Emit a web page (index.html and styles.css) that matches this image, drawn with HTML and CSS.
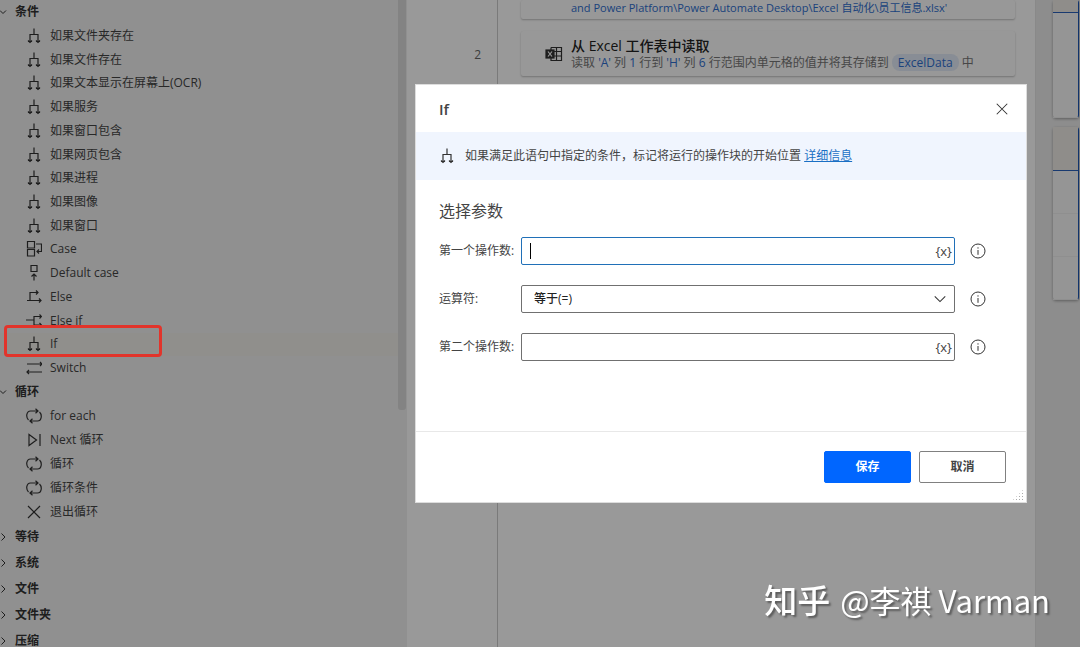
FILE: index.html
```html
<!DOCTYPE html>
<html lang="zh-CN">
<head>
    <meta charset="utf-8">
    <title>If</title>
    <link rel="stylesheet" href="styles.css">
</head>
<body>
    <svg class="sprite" aria-hidden="true">
        <symbol id="i-if" viewBox="0 0 16 16"><path d="M8 .5V6.500M4 14.500V6.500H12V14.500M2 12.500L4 14.500L6 12.500M10 12.500L12 14.500L14 12.500M2 13.500H6M10 13.500H14"/></symbol>
        <symbol id="i-case" viewBox="0 0 16 16"><path d="M1.500 .5H8.500V7H1.500ZM1.500 8.500H8.500V15H1.500ZM10 3H15.500V10.500H11M13 8.500L11 10.500L13 12.500"/></symbol>
        <symbol id="i-default" viewBox="0 0 16 16"><path d="M5 .5H11V6.500H5ZM8 15.500V9M5.500 11.500L8 9L10.500 11.500"/></symbol>
        <symbol id="i-else" viewBox="0 0 16 16"><path d="M1 11.500H15M13 9.500L15 11.500L13 13.500M4 11.500V3.500H12M10 1.500L12 3.500L10 5.500"/></symbol>
        <symbol id="i-elseif" viewBox="0 0 16 16"><path d="M0 7H8M15.500 3.500H8V12H15.500M13.500 1.500L15.500 3.500L13.500 5.500M13.500 10L15.500 12L13.500 14"/></symbol>
        <symbol id="i-switch" viewBox="0 0 16 16"><path d="M1 4H16M14 2L16 4L14 6M16 12H1M3 10L1 12L3 14"/></symbol>
        <symbol id="i-loop" viewBox="0 0 16 16"><path d="M2.500 12C-.5 9 .5 3 4.500 3H11.500M9.500 .8L12 3L9.500 5.200M13.500 4C16.500 7 15.500 13 11.500 13H4.500M6.500 10.800L4 13L6.500 15.200"/></symbol>
        <symbol id="i-next" viewBox="0 0 16 16"><path d="M3 2.500V13.500L10.500 8ZM14 2V14"/></symbol>
        <symbol id="i-x" viewBox="0 0 16 16"><path d="M2 2L14 14M14 2L2 14"/></symbol>
        <symbol id="i-down" viewBox="0 0 16 16"><path d="M2 5L8 11L14 5"/></symbol>
        <symbol id="i-right" viewBox="0 0 16 16"><path d="M5 1L12 8L5 15"/></symbol>
        <symbol id="i-info" viewBox="0 0 16 16"><circle cx="8" cy="8" r="7"/><path d="M8 7V11.800M8 4.300V5.600"/></symbol>
    </svg>

    <div class="app">
        <aside class="sidebar">
            <nav class="tree">
                <h2 class="group"><svg><use href="#i-down"/></svg>条件</h2>
                <ul class="actions conditions">
                    <li><svg><use href="#i-if"/></svg>如果文件夹存在</li>
                    <li><svg><use href="#i-if"/></svg>如果文件存在</li>
                    <li><svg><use href="#i-if"/></svg>如果文本显示在屏幕上(OCR)</li>
                    <li><svg><use href="#i-if"/></svg>如果服务</li>
                    <li><svg><use href="#i-if"/></svg>如果窗口包含</li>
                    <li><svg><use href="#i-if"/></svg>如果网页包含</li>
                    <li><svg><use href="#i-if"/></svg>如果进程</li>
                    <li><svg><use href="#i-if"/></svg>如果图像</li>
                    <li><svg><use href="#i-if"/></svg>如果窗口</li>
                    <li><svg><use href="#i-case"/></svg>Case</li>
                    <li><svg><use href="#i-default"/></svg>Default case</li>
                    <li><svg><use href="#i-else"/></svg>Else</li>
                    <li><svg><use href="#i-elseif"/></svg>Else if</li>
                    <li class="selected"><svg><use href="#i-if"/></svg>If<span class="marker"></span></li>
                    <li><svg><use href="#i-switch"/></svg>Switch</li>
                </ul>
                <h2 class="group"><svg><use href="#i-down"/></svg>循环</h2>
                <ul class="actions loops">
                    <li><svg><use href="#i-loop"/></svg>for each</li>
                    <li><svg><use href="#i-next"/></svg>Next 循环</li>
                    <li><svg><use href="#i-loop"/></svg>循环</li>
                    <li><svg><use href="#i-loop"/></svg>循环条件</li>
                    <li><svg><use href="#i-x"/></svg>退出循环</li>
                </ul>
                <div class="closed-groups">
                    <h2 class="group"><svg><use href="#i-right"/></svg>等待</h2>
                    <h2 class="group"><svg><use href="#i-right"/></svg>系统</h2>
                    <h2 class="group"><svg><use href="#i-right"/></svg>文件</h2>
                    <h2 class="group"><svg><use href="#i-right"/></svg>文件夹</h2>
                    <h2 class="group"><svg><use href="#i-right"/></svg>压缩</h2>
                </div>
            </nav>
            <div class="scroll-thumb"></div>
        </aside>

        <main class="flow">
            <div class="step first">
                <div class="line-no"></div>
                <div class="card">
                    <p class="value">and Power Platform\Power Automate Desktop\Excel 自动化\员工信息.xlsx'</p>
                </div>
            </div>
            <div class="step">
                <div class="line-no">2</div>
                <div class="card">
                    <svg class="excel" viewBox="0 0 18 16"><path d="M6 1.500H16.500V14.500H6V1.500M6 5.500H16.500M6 10H16.500M11.500 1.500V14.500"/><rect x="1" y="4" width="8" height="8"/><path class="excel-x" d="M3 5.500L7 10.500M7 5.500L3 10.500"/></svg>
                    <div>
                        <h3>从 Excel 工作表中读取</h3>
                        <p>读取 <b>'A'</b> 列 <b>1</b> 行到 <b>'H'</b> 列 <b>6</b> 行范围内单元格的值并将其存储到 <span class="variable">ExcelData</span> 中</p>
                    </div>
                </div>
            </div>
            <div class="step rest">
                <div class="line-no"></div>
            </div>
        </main>

        <aside class="variables">
            <section class="var-card top">
                <div class="var-head"></div>
                <div class="var-row"></div>
            </section>
            <section class="var-card">
                <div class="var-head"></div>
                <div class="var-row"></div>
                <div class="var-row"></div>
                <div class="var-row"></div>
            </section>
        </aside>
    </div>

    <div class="overlay"></div>

    <form class="dialog" role="dialog" aria-labelledby="dialogTitle" onsubmit="return false">
        <header class="dialog-head">
            <h1 id="dialogTitle">If</h1>
            <button type="button" class="close" aria-label="关闭"><svg><use href="#i-x"/></svg></button>
        </header>
        <div class="summary">
            <svg><use href="#i-if"/></svg>
            <p>如果满足此语句中指定的条件，标记将运行的操作块的开始位置 <a href="#">详细信息</a></p>
        </div>
        <div class="params">
            <h2>选择参数</h2>
            <div class="row">
                <label for="first">第一个操作数:</label>
                <div class="field active">
                    <input type="text" id="first">
                    <span class="caret"></span>
                    <button type="button">{x}</button>
                </div>
                <svg class="info"><use href="#i-info"/></svg>
            </div>
            <div class="row">
                <label for="operator">运算符:</label>
                <div class="field">
                    <select id="operator"><option>等于(=)</option></select>
                    <svg class="arrow"><use href="#i-down"/></svg>
                </div>
                <svg class="info"><use href="#i-info"/></svg>
            </div>
            <div class="row">
                <label for="second">第二个操作数:</label>
                <div class="field">
                    <input type="text" id="second">
                    <button type="button">{x}</button>
                </div>
                <svg class="info"><use href="#i-info"/></svg>
            </div>
        </div>
        <footer class="dialog-foot">
            <button type="submit" class="save">保存</button>
            <button type="button" class="cancel">取消</button>
        </footer>
        <span class="grip"></span>
    </form>

    <div class="watermark"><b>知乎</b><span>@李祺 Varman</span></div>
</body>
</html>
```
FILE: styles.css
```css
* {
    box-sizing: border-box;
}
body {
    margin: 0;
    font-family: "Open Sans", "Noto Sans CJK SC", sans-serif;
    font-size: 12px;
    line-height: 16px;
    color: #444;
    overflow: hidden;
}
h1, h2, h3, p, ul {
    margin: 0;
    padding: 0;
}
button, input, select {
    font: inherit;
    color: inherit;
}
svg {
    width: 16px;
    height: 16px;
    flex: none;
    fill: none;
    stroke: #333;
    stroke-width: 1.2;
}
.sprite {
    position: absolute;
    width: 0;
    height: 0;
}
.app {
    display: flex;
    height: 100vh;
    background-color: #fff;
}

/* action tree */
.sidebar {
    display: flex;
    width: 407px;
    flex: none;
    padding-right: 1px;
    background-color: #f0f0f0;
}
.tree {
    flex: 1;
}
.group {
    display: flex;
    align-items: center;
    gap: 8px;
    height: 24px;
    font-size: 12px;
    font-weight: 600;
    color: #333;
}
.group svg {
    width: 8px;
    height: 8px;
    margin-left: -1px;
    stroke-width: 2;
}
.actions {
    display: grid;
    grid-auto-rows: 1fr;
    list-style: none;
}
.conditions {
    height: 356px;
}
.loops {
    height: 120px;
}
.closed-groups {
    display: grid;
    grid-auto-rows: 1fr;
    align-items: center;
    height: 130px;
}
.actions li {
    display: flex;
    align-items: center;
    gap: 8px;
    padding-left: 26px;
}
.actions .selected {
    position: relative;
    background-color: #f1eeea;
}
.marker {
    position: absolute;
    z-index: 3;
    top: -8px;
    left: 4px;
    width: 158px;
    height: 32px;
    border: 3px solid #e2342b;
    border-radius: 4px;
}
.scroll-thumb {
    width: 8px;
    height: 410px;
    background-color: #dadada;
    border-radius: 0 0 3px 3px;
}

/* flow designer */
.flow {
    flex: 1;
    min-width: 0;
    display: flex;
    flex-direction: column;
}
.step {
    display: flex;
    padding-right: 20px;
}
.step.rest {
    flex: 1;
}
.line-no {
    display: flex;
    align-items: center;
    justify-content: flex-end;
    width: 91px;
    flex: none;
    margin-right: 23px;
    padding: 14px 16px 0 0;
    border-right: 1px solid #ccc;
    color: #666;
}
.card {
    flex: 1;
    display: flex;
    align-items: center;
    gap: 8px;
    height: 45px;
    margin-top: 12px;
    padding-left: 24px;
    background-color: #fdfdfd;
    border-radius: 2px;
    box-shadow: 0 1px 2px rgba(0, 0, 0, 0.25);
    color: #777;
    white-space: nowrap;
}
.step.first .card {
    height: 19px;
    margin-top: 0;
    padding: 0 0 4px 50px;
}
.card h3 {
    font-size: 14px;
    line-height: 19px;
    font-weight: 500;
    color: #222;
}
.card b, .value, .variable {
    font-weight: 400;
    color: #2f6fd0;
}
.value {
    font-size: 11px;
}
.variable {
    padding: 0 6px;
    border-radius: 8px;
    background-color: #e3ebf8;
}
.excel {
    width: 18px;
}
.excel rect {
    fill: #333;
}
.excel .excel-x {
    stroke: #fff;
}

/* variables pane */
.variables {
    width: 45px;
    flex: none;
    padding-left: 17px;
    background-color: #ececec;
    border-left: 1px solid #e4e4e4;
}
.var-card {
    margin-bottom: 9px;
    background-color: #f8f8f8;
    border-right: 1px solid #1d57b5;
    border-radius: 3px;
    box-shadow: 0 1px 3px rgba(0, 0, 0, 0.35);
    margin-right: 1px;
}
.var-head {
    height: 44px;
    background-color: #efebe7;
    border-bottom: 1px solid #2a62bb;
}
.var-row {
    height: 43px;
    border-bottom: 1px solid #eee;
}
.top .var-head {
    height: 13px;
}
.top .var-row {
    height: 105px;
}

.overlay {
    position: fixed;
    z-index: 1;
    inset: 0;
    background-color: rgba(0, 0, 0, 0.4);
}

/* dialog */
.dialog {
    position: absolute;
    z-index: 2;
    top: 84px;
    left: 415px;
    right: 53px;
    background-color: #fff;
    border: 1px solid #ddd;
}
.dialog-head {
    display: flex;
    align-items: center;
    justify-content: space-between;
    height: 47px;
    padding: 0 16px 0 23px;
}
.dialog-head h1 {
    font-size: 15px;
    line-height: 20px;
    font-weight: 600;
}
.close {
    display: flex;
    padding: 0;
    border: none;
    background: none;
}
.close svg {
    width: 14px;
    height: 14px;
    margin: 1px;
}
.summary {
    display: flex;
    align-items: center;
    gap: 10px;
    height: 48px;
    padding-left: 23px;
    background-color: #f0f5fe;
}
.summary a {
    color: #1a6fc4;
}
.params {
    display: flex;
    flex-direction: column;
    gap: 20px;
    padding: 20px 40px 70px 23px;
}
.params h2 {
    margin-bottom: -6px;
    font-size: 16px;
    line-height: 23px;
    font-weight: 400;
}
.row {
    display: grid;
    grid-template-columns: 74px 1fr 16px;
    column-gap: 8px;
    align-items: center;
}
.row label {
    white-space: nowrap;
}
.field {
    position: relative;
    display: flex;
    align-items: center;
    height: 28px;
    margin-right: 7px;
    border: 1px solid #707070;
    border-radius: 2px;
}
.field.active {
    border-color: #2070b8;
}
.field input, .field select {
    flex: 1;
    min-width: 0;
    height: 26px;
    padding: 0 8px;
    border: none;
    outline: none;
    background: none;
}
.field select {
    padding: 0 12px;
    appearance: none;
    font-weight: 500;
    color: #222;
}
.field button {
    padding: 0 2px;
    border: none;
    background: none;
    font-size: 13px;
}
.caret {
    position: absolute;
    top: 5px;
    left: 8px;
    width: 1px;
    height: 16px;
    background-color: #000;
}
.arrow {
    position: absolute;
    right: 7px;
    width: 14px;
    height: 14px;
    pointer-events: none;
}
.info {
    stroke-width: 1;
}
.dialog-foot {
    display: flex;
    justify-content: flex-end;
    gap: 8px;
    padding: 19px 20px;
    border-top: 1px solid #e8e8e8;
}
.dialog-foot button {
    width: 87px;
    height: 32px;
    border: 1px solid #808080;
    border-radius: 2px;
    background-color: #fff;
    font-weight: 600;
}
.dialog-foot .save {
    border-color: #0066ff;
    background-color: #0066ff;
    color: #fff;
}
.grip {
    position: absolute;
    right: 2px;
    bottom: 1px;
    width: 12px;
    height: 12px;
    background-image: radial-gradient(#aaa 1px, transparent 1px);
    background-size: 3px 3px;
    clip-path: polygon(100% 0, 100% 100%, 0 100%);
}

.watermark {
    position: fixed;
    z-index: 4;
    right: 30px;
    bottom: 25px;
    display: flex;
    align-items: baseline;
    gap: 10px;
    font-family: "Noto Sans CJK SC", sans-serif;
    font-size: 31px;
    line-height: 44px;
    color: #fff;
    text-shadow: 2px 2px 2px rgba(0, 0, 0, 0.4);
    white-space: nowrap;
}
.watermark b {
    font-size: 33px;
    font-weight: 500;
}
```
